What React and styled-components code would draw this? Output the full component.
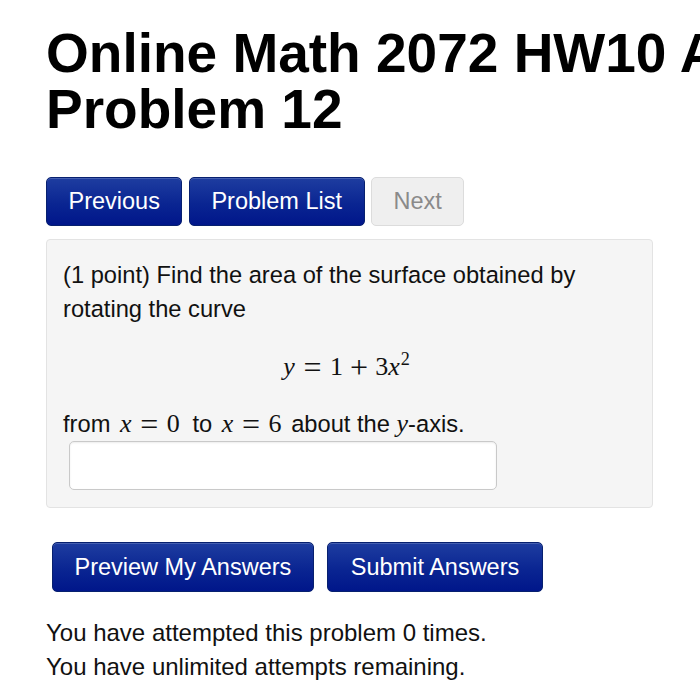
import React from 'react';
import styled, { createGlobalStyle, css } from 'styled-components';

const GlobalStyle = createGlobalStyle`
  html, body {
    margin: 0;
    padding: 0;
    background: #fff;
    overflow: hidden;
  }
  body {
    font-family: "Liberation Sans", Arial, Helvetica, sans-serif;
    color: #111;
  }
`;

const Page = styled.div`
  width: 700px;
  height: 699px;
  padding: 0 46px;
  box-sizing: border-box;
  overflow: hidden;
`;

const Title = styled.h1`
  margin: 25px 0 0;
  font-size: 55px;
  line-height: 56px;
  font-weight: bold;
  color: #000;
  white-space: nowrap;
`;

const NavRow = styled.div`
  display: flex;
  gap: 6.5px;
  margin-top: 40px;
`;

const Button = styled.button`
  height: 49px;
  padding: 0 21.5px;
  font-family: inherit;
  font-size: 23.5px;
  border-radius: 5px;
  cursor: pointer;
  color: #fff;
  border: 1px solid #07206f;
  background: linear-gradient(to bottom, #1e3da0 0%, #0a2592 55%, #00168a 100%);
  box-shadow: inset 0 1px 0 rgba(255, 255, 255, 0.18);
  ${({ disabled }) => disabled && css`
    color: #8a8a8a;
    border: 1px solid #dcdcdc;
    background: #efefef;
    box-shadow: none;
    cursor: default;
  `}
`;

const Panel = styled.div`
  margin-top: 13px;
  width: 607px;
  box-sizing: border-box;
  padding: 18px 16px 17px;
  background: #f5f5f5;
  border: 1px solid #e3e3e3;
  border-radius: 4px;
`;

const Text = styled.p`
  margin: 0;
  font-size: 23.7px;
  line-height: 34px;
  color: #111;
`;

const Display = styled.div`
  margin: 24px 0 23px;
  text-align: center;
  font-family: "Liberation Serif", "Times New Roman", serif;
  font-size: 26px;
  line-height: 34px;
  padding-right: 6px;
`;

const Math = styled.span`
  margin: 0 ${({ after }) => after || 0}px 0 3px;
`;

const Var = styled.span`
  font-family: "Liberation Serif", "Times New Roman", serif;
  font-style: italic;
  font-size: 26px;
`;

const Num = styled.span`
  font-family: "Liberation Serif", "Times New Roman", serif;
  font-size: 26px;
`;

const Op = styled.span`
  font-family: "Liberation Serif", "Times New Roman", serif;
  font-size: 32px;
  line-height: 0;
  vertical-align: -0.09em;
  margin: 0 ${({ narrow }) => (narrow ? '0.22em' : '0.27em')};
`;

const Sup = styled.sup`
  font-size: 0.7em;
  line-height: 0;
  vertical-align: 0.55em;
  margin-left: 1px;
`;

const AnswerInput = styled.input`
  display: block;
  margin-left: 6px;
  width: 428px;
  height: 49px;
  box-sizing: border-box;
  border: 1px solid #c9c9c9;
  border-radius: 5px;
  background: #fff;
  box-shadow: inset 0 1px 2px rgba(0, 0, 0, 0.08);
  font-size: 24px;
  padding: 0 10px;
`;

const SubmitRow = styled.div`
  display: flex;
  gap: 13px;
  margin: 34px 0 0 6px;
`;

const SubmitButton = styled(Button)`
  height: 50px;
  padding: 0 ${({ wide }) => (wide ? 23 : 21.5)}px;
`;

const Status = styled.div`
  margin-top: 24px;
  font-size: 24px;
  line-height: 34px;
  color: #111;
`;

export default function App() {
  return (
    <Page>
      <GlobalStyle />
      <Title>
        Online Math 2072 HW10 A
        <br />
        Problem 12
      </Title>

      <NavRow>
        <Button>Previous</Button>
        <Button>Problem List</Button>
        <Button disabled>Next</Button>
      </NavRow>

      <Panel>
        <Text>(1 point) Find the area of the surface obtained by rotating the curve</Text>
        <Display>
          <Var>y</Var>
          <Op>=</Op>
          <Num>1</Num>
          <Op narrow>+</Op>
          <Num>3</Num>
          <Var>x</Var>
          <Sup>2</Sup>
        </Display>
        <Text>
          from <Math after={6}><Var>x</Var><Op>=</Op><Num>0</Num></Math> to <Math after={3}><Var>x</Var><Op>=</Op><Num>6</Num></Math> about the <Var>y</Var>-axis.
        </Text>
        <AnswerInput type="text" />
      </Panel>

      <SubmitRow>
        <SubmitButton>Preview My Answers</SubmitButton>
        <SubmitButton wide>Submit Answers</SubmitButton>
      </SubmitRow>

      <Status>
        You have attempted this problem 0 times.
        <br />
        You have unlimited attempts remaining.
      </Status>
    </Page>
  );
}
